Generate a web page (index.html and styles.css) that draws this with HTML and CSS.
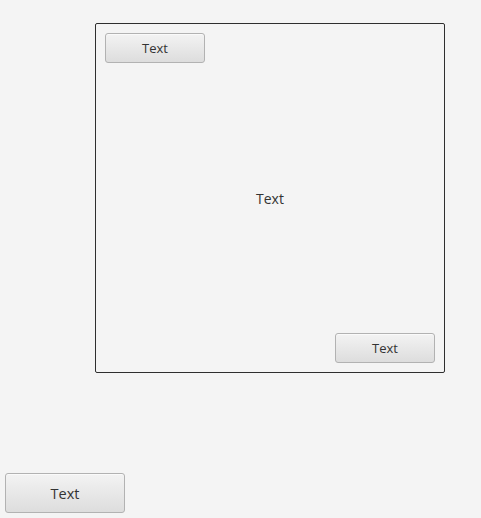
FILE: index.html
```html
<!DOCTYPE html>
<html>
<head>
<meta charset="utf-8">
<link rel="stylesheet" href="styles.css">
</head>
<body>
<div class="page">
  <div class="frame">
    <div class="row top"><button class="btn small">Text</button></div>
    <div class="row mid"><span class="label">Text</span></div>
    <div class="row bottom"><button class="btn small">Text</button></div>
  </div>
  <button class="btn big">Text</button>
</div>
</body>
</html>
```
FILE: styles.css
```css
html, body {
  margin: 0;
  padding: 0;
  background: #f4f4f4;
}
.page {
  width: 481px;
  height: 518px;
  display: flex;
  flex-direction: column;
  align-items: flex-start;
  font-family: "Open Sans", "Noto Sans", sans-serif;
  color: #333;
}
.frame {
  margin: 23px 0 0 95px;
  width: 350px;
  height: 350px;
  box-sizing: border-box;
  border: 1px solid #2e2e2e;
  border-radius: 2px;
  padding: 9px;
  display: flex;
  flex-direction: column;
}
.row { display: flex; }
.top { justify-content: flex-start; }
.bottom { justify-content: flex-end; }
.mid {
  flex: 1;
  align-items: center;
  justify-content: center;
  padding-top: 2px;
}
.label {
  font-size: 14px;
  line-height: 1;
}
.btn {
  box-sizing: border-box;
  font-family: "Open Sans", "Noto Sans", sans-serif;
  color: #333;
  border: 1px solid #b2b2b2;
  border-radius: 3px;
  background: linear-gradient(#f3f3f3, #dddddd);
  box-shadow: inset 0 1px 0 rgba(255,255,255,0.6);
  padding: 0;
  margin: 0;
  display: flex;
  align-items: center;
  justify-content: center;
}
.small {
  width: 100px;
  height: 30px;
  font-size: 13px;
}
.big {
  margin: 100px 0 0 5px;
  width: 120px;
  height: 40px;
  font-size: 14.5px;
}
```
